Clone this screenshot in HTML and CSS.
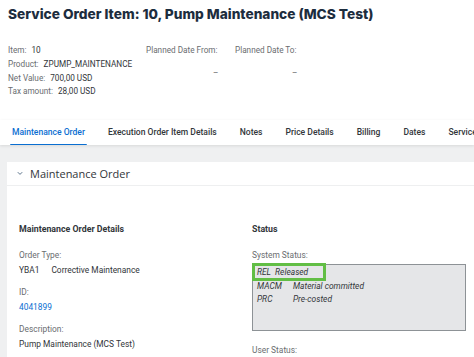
FILE: index.html
```html
<!DOCTYPE html>
<html lang="en">
<head>
    <meta charset="UTF-8">
    <meta name="viewport" content="width=device-width, initial-scale=1.0">
    <title>Service Order Item</title>
    <link rel="stylesheet" href="styles.css">
</head>
<body>
    <div class="header">
        <h1>Service Order Item: 10, Pump Maintenance (MCS Test)</h1>
        <div class="attributes">
            <div class="attr-col">
                <div><span class="label">Item:</span><span class="value">10</span></div>
                <div><span class="label">Product:</span><span class="value">ZPUMP_MAINTENANCE</span></div>
                <div><span class="label">Net Value:</span><span class="value">700,00 USD</span></div>
                <div><span class="label">Tax amount:</span><span class="value">28,00 USD</span></div>
            </div>
            <div class="attr-col date-col">
                <span class="label">Planned Date From:</span>
                <span class="dash">–</span>
            </div>
            <div class="attr-col date-col date-to">
                <span class="label">Planned Date To:</span>
                <span class="dash">–</span>
            </div>
        </div>
    </div>

    <div class="tabs">
        <span class="tab active">Maintenance Order</span>
        <span class="tab">Execution Order Item Details</span>
        <span class="tab">Notes</span>
        <span class="tab">Price Details</span>
        <span class="tab">Billing</span>
        <span class="tab">Dates</span>
        <span class="tab">Service</span>
    </div>

    <div class="content">
        <div class="card">
            <div class="card-header">
                <svg class="chevron" width="6" height="5" viewBox="0 0 6 5">
                    <path d="M0.8 1.2 L3 3.4 L5.2 1.2" fill="none" stroke="#5b738b" stroke-width="1"/>
                </svg>
                <span>Maintenance Order</span>
            </div>
            <div class="card-body">
                <div class="section">
                    <h2>Maintenance Order Details</h2>
                    <div class="field">
                        <div class="label">Order Type:</div>
                        <div class="value">YBA1<span class="gap"></span>Corrective Maintenance</div>
                    </div>
                    <div class="field">
                        <div class="label">ID:</div>
                        <div class="value link">4041899</div>
                    </div>
                    <div class="field">
                        <div class="label">Description:</div>
                        <div class="value">Pump Maintenance (MCS Test)</div>
                    </div>
                </div>
                <div class="section">
                    <h2>Status</h2>
                    <div class="field">
                        <div class="label">System Status:</div>
                        <div class="status-box">
                            <div class="highlight">REL&nbsp; Released</div>
                            <div class="status-row"></div>
                            <div class="status-row"><span class="code">MACM</span><span>Material committed</span></div>
                            <div class="status-row"><span class="code">PRC</span><span>Pre-costed</span></div>
                        </div>
                    </div>
                    <div class="field">
                        <div class="label">User Status:</div>
                    </div>
                </div>
            </div>
        </div>
    </div>
</body>
</html>
```

FILE: styles.css
```css
body, html {
    margin: 0;
    padding: 0;
    font-family: Roboto, "Liberation Sans", Arial, sans-serif;
    color: #32363a;
    background-color: #fff;
    overflow: hidden;
    height: 357px;
}

.header {
    padding: 3px 8px 0 8px;
}

.header h1 {
    margin: 0;
    font-family: Inter, "Liberation Sans", sans-serif;
    font-size: 13.7px;
    font-weight: 800;
    color: #1d2d3e;
    line-height: 22px;
}

.attributes {
    display: flex;
    margin-top: 19px;
    font-size: 8.2px;
    line-height: 13.8px;
    white-space: nowrap;
}

.attr-col {
    width: 138px;
}

.attr-col .label {
    margin-right: 5px;
}

.date-col {
    display: flex;
    flex-direction: column;
    width: 89px;
}

.label {
    color: #6a6d70;
}

.value {
    color: #32363a;
}

.dash {
    margin-top: 9px;
    padding-left: 67px;
    color: #6a6d70;
}

.date-to .dash {
    padding-left: 57px;
}

.tabs {
    display: flex;
    gap: 23px;
    margin-top: 21px;
    padding: 0 0 0 12px;
    height: 25px;
    white-space: nowrap;
    overflow: hidden;
    box-shadow: 0 1px 3px rgba(0, 0, 0, 0.1);
    position: relative;
    z-index: 2;
}

.tab {
    font-family: Roboto, sans-serif;
    font-size: 8.55px;
    font-weight: 500;
    color: #32363a;
    line-height: 24px;
    position: relative;
}

.tab.active {
    color: #0a6ed1;
}

.tab.active::after {
    content: '';
    position: absolute;
    left: -2px;
    right: -2px;
    bottom: -1px;
    height: 2px;
    background-color: #0a6ed1;
    border-radius: 1px;
}

.content {
    background-color: #eff0f1;
    padding: 17px 0 0 7px;
    height: 300px;
}

.card {
    background-color: #fff;
    height: 100%;
}

.card-header {
    display: flex;
    align-items: center;
    gap: 7px;
    height: 23px;
    padding-left: 10px;
    border-bottom: 1px solid #eeeff0;
    font-family: "Open Sans", sans-serif;
    font-size: 11px;
    color: #32363a;
}

.card-body {
    display: grid;
    grid-template-columns: 233px 214px;
    padding: 36px 0 0 12px;
}

.section h2 {
    margin: 0 0 12px 0;
    font-family: Roboto, sans-serif;
    font-size: 8.8px;
    font-weight: 700;
    color: #32363a;
    line-height: 14px;
}

.field {
    font-size: 8.4px;
    line-height: 14px;
    margin-bottom: 8px;
}

.field .label {
    margin-bottom: 1px;
}

.gap {
    display: inline-block;
    width: 12px;
}

.link {
    color: #0a6ed1;
}

.status-box {
    position: relative;
    margin-top: 2px;
    height: 60px;
    background-color: #e5e6e8;
    border: 1px solid #8d9296;
    padding: 3px 4px 2px 4px;
    font-style: italic;
    font-size: 8.4px;
    line-height: 12.3px;
    margin-bottom: 12px;
}

.status-row {
    display: flex;
    min-height: 12.3px;
}

.status-row .code {
    width: 36px;
}

.highlight {
    position: absolute;
    left: -1px;
    top: -2px;
    width: 64px;
    height: 12px;
    padding: 0 2px;
    border: 3px solid #62be45;
    background-color: #e5e6e8;
    line-height: 12px;
}
```
